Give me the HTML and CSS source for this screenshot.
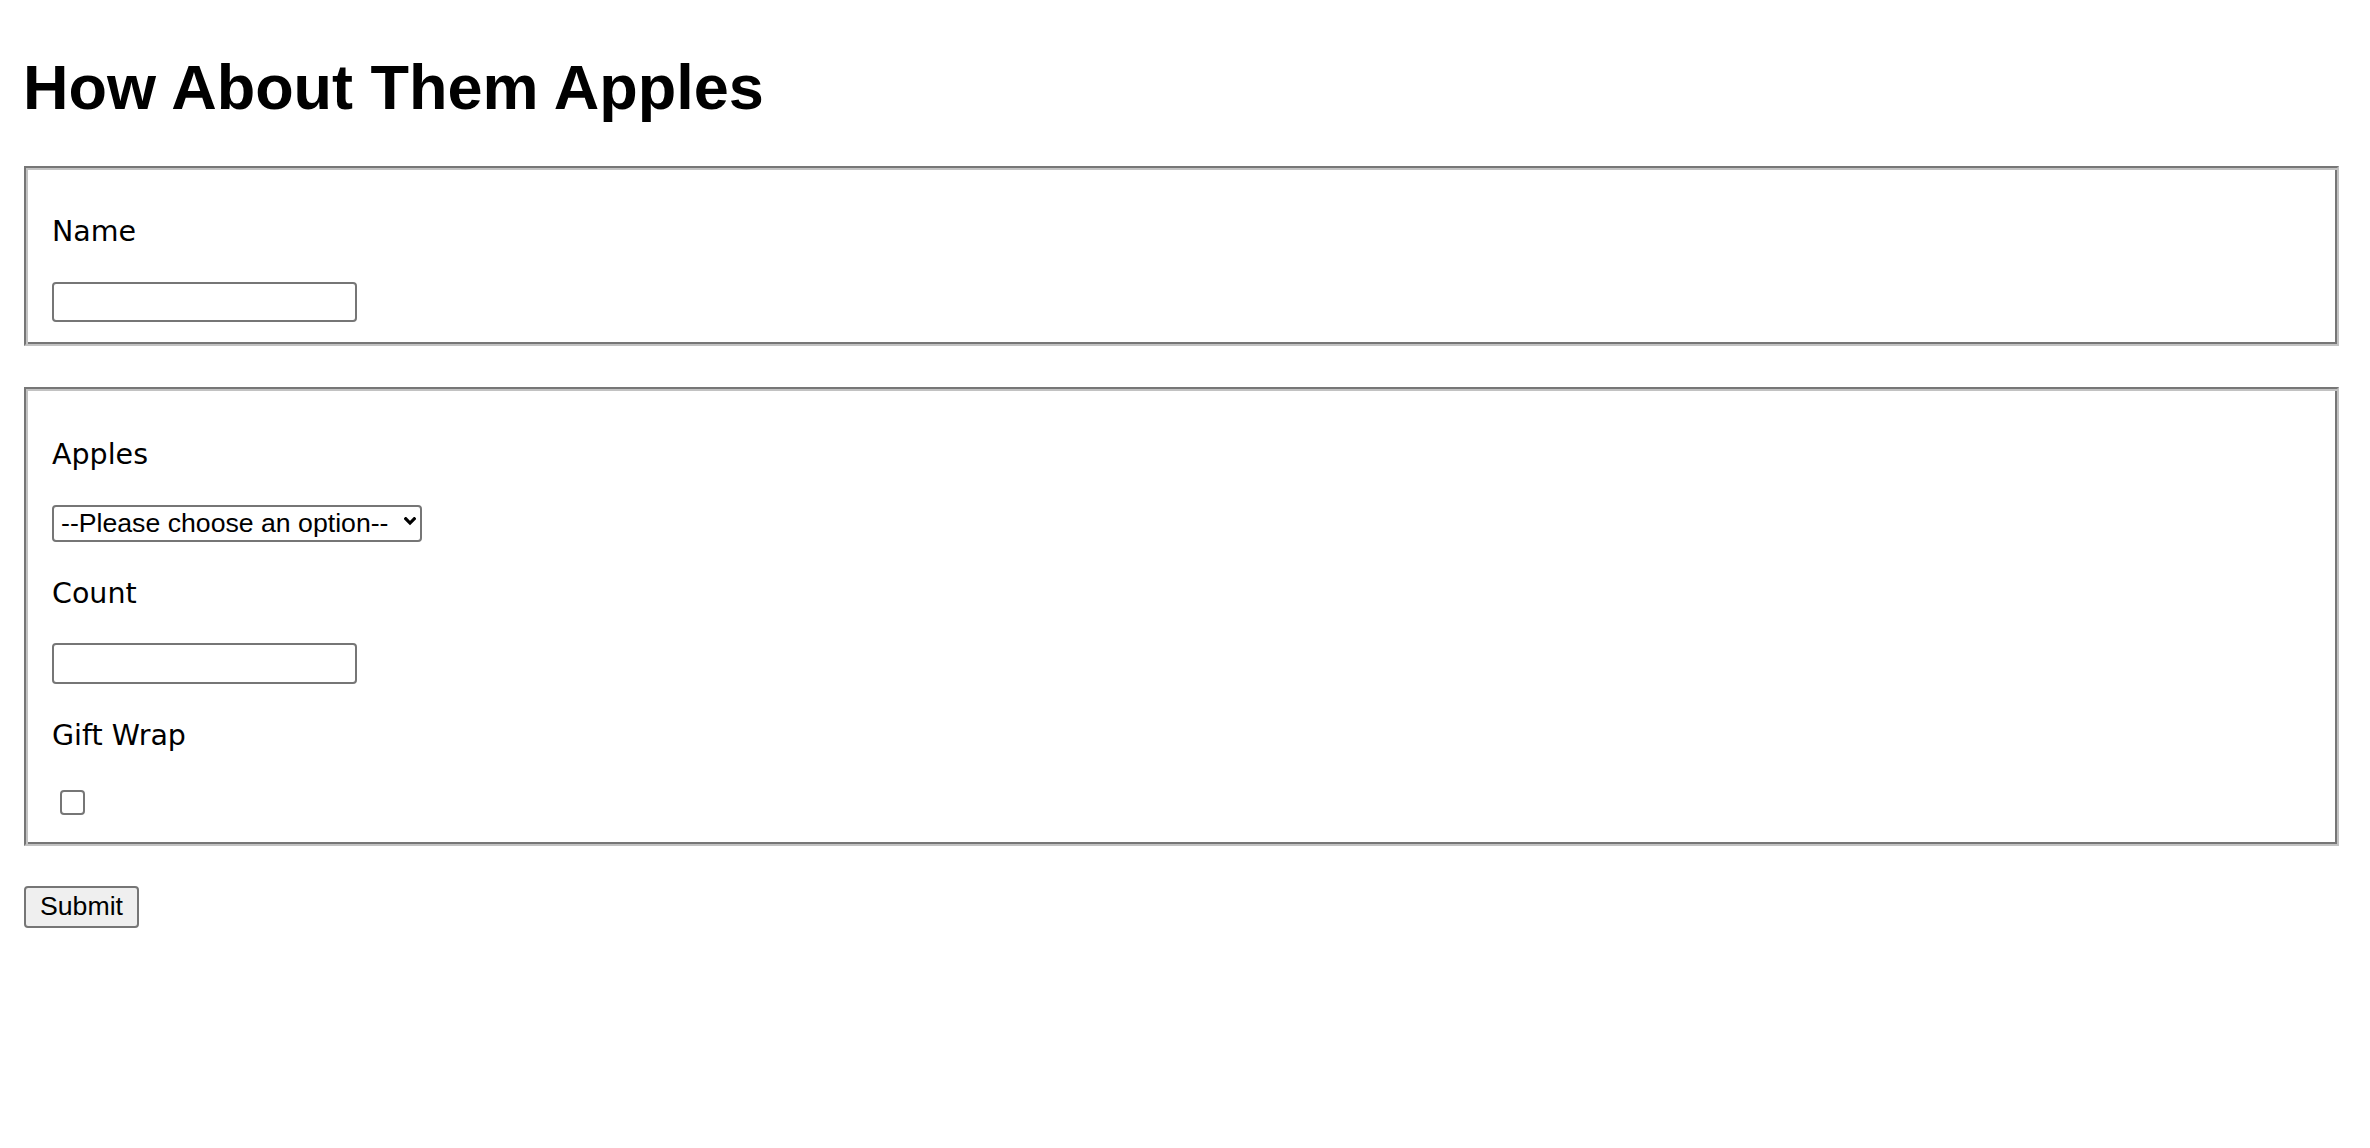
FILE: index.html
```html
<!DOCTYPE html>
<html lang="en">
<head>
<meta charset="utf-8">
<title>How About Them Apples</title>
<link rel="stylesheet" href="styles.css">
</head>
<body>
<main class="page">
  <h1 class="title">How About Them Apples</h1>
  <form class="order-form" onsubmit="return false">
    <fieldset class="group group-person">
      <div class="field">
        <label class="field-label" for="name">Name</label>
        <input class="text-input" id="name" name="name" type="text">
      </div>
    </fieldset>
    <fieldset class="group group-order">
      <div class="field">
        <label class="field-label" for="apples">Apples</label>
        <div class="select-wrap">
          <select class="select" id="apples" name="apples">
            <option value="">--Please choose an option--</option>
            <option value="fuji">Fuji</option>
            <option value="gala">Gala</option>
            <option value="honeycrisp">Honeycrisp</option>
          </select>
          <svg class="select-arrow" viewBox="0 0 12 9" aria-hidden="true">
            <polyline points="1.7,1.7 6,6 10.3,1.7" fill="none" stroke="#000" stroke-width="3.1" stroke-linecap="square" stroke-linejoin="miter"/>
          </svg>
        </div>
      </div>
      <div class="field">
        <label class="field-label" for="count">Count</label>
        <input class="text-input" id="count" name="count" type="text" inputmode="numeric">
      </div>
      <div class="field">
        <label class="field-label" for="gift">Gift Wrap</label>
        <input class="checkbox" id="gift" name="gift" type="checkbox">
      </div>
    </fieldset>
    <button class="submit" type="submit">Submit</button>
  </form>
</main>
</body>
</html>
```

FILE: styles.css
```css
html, body {
  margin: 0;
  padding: 0;
  background: #ffffff;
  color: #000000;
}

.page {
  padding: 50.6px 31px 40px 24px;
}

.title {
  margin: 0 0 43.4px -1px;
  font-family: "Liberation Sans", Arial, sans-serif;
  font-weight: bold;
  font-size: 63px;
  line-height: 72px;
}

.order-form {
  margin: 0;
}

.group {
  margin: 0;
  min-width: 0;
  border: 2px solid;
  border-color: #767676 #c2c2c2 #c2c2c2 #767676;
  box-shadow: inset 2px 2px 0 #c2c2c2, inset -2px -2px 0 #767676;
  padding: 12px 26px 21.5px;
}

.group + .group {
  margin-top: 41px;
}

.group-order {
  padding-top: 14px;
}

.field {
  margin-top: 35.5px;
}

.field-label {
  display: block;
  margin: 0 0 33.2px;
  font-family: "DejaVu Sans", Verdana, sans-serif;
  font-size: 28.5px;
  line-height: 33px;
}

.text-input {
  display: block;
  box-sizing: border-box;
  width: 305px;
  height: 40.7px;
  margin: 0;
  padding: 2px 5px;
  border: 2px solid #767676;
  border-radius: 4px;
  background: #ffffff;
  font-family: "Liberation Sans", Arial, sans-serif;
  font-size: 26.67px;
  color: #000000;
}

.select-wrap {
  position: relative;
  width: 370px;
}

.select {
  display: block;
  box-sizing: border-box;
  width: 100%;
  height: 37px;
  margin: 0;
  padding: 0 30px 0 7px;
  -webkit-appearance: none;
  appearance: none;
  border: 2px solid #767676;
  border-radius: 4px;
  background: #ffffff;
  font-family: "Liberation Sans", Arial, sans-serif;
  font-size: 26.67px;
  line-height: 33px;
  color: #000000;
}

.select-arrow {
  position: absolute;
  right: 6.5px;
  top: 12px;
  width: 12px;
  height: 9px;
  pointer-events: none;
}

.checkbox {
  display: block;
  box-sizing: border-box;
  width: 25px;
  height: 25px;
  margin: 38px 0 7px 8px;
  -webkit-appearance: none;
  appearance: none;
  border: 2px solid #767676;
  border-radius: 4px;
  background: #ffffff;
}

.submit {
  display: block;
  box-sizing: border-box;
  width: 115px;
  height: 41.5px;
  margin: 40.3px 0 0;
  padding: 0;
  border: 2px solid #767676;
  border-radius: 4px;
  background: #efefef;
  font-family: "Liberation Sans", Arial, sans-serif;
  font-size: 26.67px;
  color: #000000;
  text-align: center;
}
```
